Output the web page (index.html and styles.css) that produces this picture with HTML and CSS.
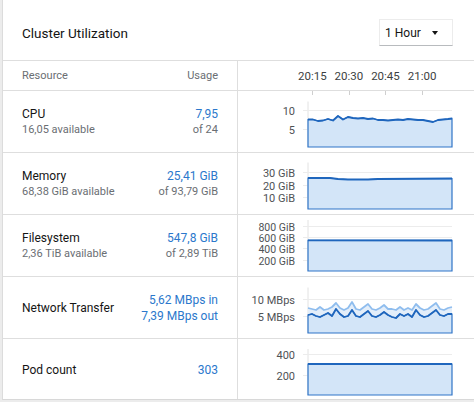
FILE: index.html
```html
<!DOCTYPE html>
<html lang="en">
<head>
<meta charset="utf-8">
<title>Cluster Utilization</title>
<link rel="stylesheet" href="styles.css">
</head>
<body>
<div class="card">
  <div class="card-head">
    <h2 class="title">Cluster Utilization</h2>
    <div class="select"><span>1 Hour</span><span class="caret"></span></div>
  </div>

  <div class="row colhead">
    <div class="left"><span>Resource</span><span>Usage</span></div>
    <div class="right times"><span>20:15</span><span>20:30</span><span>20:45</span><span>21:00</span></div>
  </div>

  <div class="row">
    <div class="left">
      <div class="res"><div class="name">CPU</div><div class="sub">16,05 available</div></div>
      <div class="use"><div class="val">7,95</div><div class="sub">of 24</div></div>
    </div>
    <div class="right">
      <svg class="chart" width="236" height="61" viewBox="0 0 236 61">
        <g class="ticks"><line x1="74.5" y1="-1" x2="74.5" y2="4"/><line x1="111.5" y1="-1" x2="111.5" y2="4"/><line x1="147.5" y1="-1" x2="147.5" y2="4"/><line x1="184.5" y1="-1" x2="184.5" y2="4"/></g>
        <line class="axis" x1="70" y1="10.5" x2="70" y2="56"/>
        <line class="grid" x1="65" y1="19.5" x2="214" y2="19.5"/>
        <line class="grid" x1="65" y1="38.5" x2="214" y2="38.5"/>
        <text class="lbl" x="57" y="23.5">10</text>
        <text class="lbl" x="57" y="42.5">5</text>
        <polygon class="area" points="70,28.5 75,28.5 80,30 85,29.5 90,28 95,29.5 100,25 105,28.5 110,26 115,27 120,27.5 125,27 130,28 135,27.5 140,29 145,29 150,29.5 155,29 160,28.5 165,29 170,28 175,28.5 180,29 185,29 190,30 195,31 200,29 205,28.5 210,28 214,27.5 214,56 70,56"/>
        <polyline class="line" points="70,28.5 75,28.5 80,30 85,29.5 90,28 95,29.5 100,25 105,28.5 110,26 115,27 120,27.5 125,27 130,28 135,27.5 140,29 145,29 150,29.5 155,29 160,28.5 165,29 170,28 175,28.5 180,29 185,29 190,30 195,31 200,29 205,28.5 210,28 214,27.5"/>
      </svg>
    </div>
  </div>

  <div class="row">
    <div class="left">
      <div class="res"><div class="name">Memory</div><div class="sub">68,38 GiB available</div></div>
      <div class="use"><div class="val">25,41 GiB</div><div class="sub">of 93,79 GiB</div></div>
    </div>
    <div class="right">
      <svg class="chart" width="236" height="61" viewBox="0 0 236 61">
        <line class="axis" x1="70" y1="9.5" x2="70" y2="56"/>
        <line class="grid" x1="65" y1="19.5" x2="214" y2="19.5"/>
        <line class="grid" x1="65" y1="32.5" x2="214" y2="32.5"/>
        <line class="grid" x1="65" y1="44.5" x2="214" y2="44.5"/>
        <text class="lbl" x="57" y="23.5">30 GiB</text>
        <text class="lbl" x="57" y="36.5">20 GiB</text>
        <text class="lbl" x="57" y="48.5">10 GiB</text>
        <polygon class="area" points="70,25 92,25 100,26 110,26.5 130,26.5 140,26 214,25.5 214,56 70,56"/>
        <polyline class="line" points="70,25 92,25 100,26 110,26.5 130,26.5 140,26 214,25.5"/>
      </svg>
    </div>
  </div>

  <div class="row">
    <div class="left">
      <div class="res"><div class="name">Filesystem</div><div class="sub">2,36 TiB available</div></div>
      <div class="use"><div class="val">547,8 GiB</div><div class="sub">of 2,89 TiB</div></div>
    </div>
    <div class="right">
      <svg class="chart" width="236" height="61" viewBox="0 0 236 61">
        <line class="axis" x1="70" y1="5" x2="70" y2="56"/>
        <line class="grid" x1="65" y1="11.5" x2="214" y2="11.5"/>
        <line class="grid" x1="65" y1="22.5" x2="214" y2="22.5"/>
        <line class="grid" x1="65" y1="33.5" x2="214" y2="33.5"/>
        <line class="grid" x1="65" y1="45.5" x2="214" y2="45.5"/>
        <text class="lbl dense" x="57" y="15.5">800 GiB</text>
        <text class="lbl dense" x="57" y="26.5">600 GiB</text>
        <text class="lbl dense" x="57" y="37.5">400 GiB</text>
        <text class="lbl dense" x="57" y="49.5">200 GiB</text>
        <polygon class="area" points="70,25.3 214,25.3 214,56 70,56"/>
        <polyline class="line" points="70,25.3 214,25.5"/>
      </svg>
    </div>
  </div>

  <div class="row">
    <div class="left">
      <div class="res"><div class="name">Network Transfer</div></div>
      <div class="use"><div class="val">5,62 MBps in</div><div class="val">7,39 MBps out</div></div>
    </div>
    <div class="right">
      <svg class="chart" width="236" height="61" viewBox="0 0 236 61">
        <line class="axis" x1="70" y1="10.5" x2="70" y2="56"/>
        <line class="grid" x1="65" y1="22.5" x2="214" y2="22.5"/>
        <line class="grid" x1="65" y1="39.5" x2="214" y2="39.5"/>
        <text class="lbl" x="57" y="26.5">10 MBps</text>
        <text class="lbl" x="57" y="43.5">5 MBps</text>
        <polygon class="area2" points="70,31 74,32 78,33 82,30 86,33 90,32 94,30 98,26 102,31 106,33 110,31 114,25 118,32 122,33 126,30 130,27 134,32 138,33 142,31 146,28 150,32 154,32 158,33 162,30 166,33 170,31 174,33 178,27 182,31 186,33 190,32 194,29 198,26 202,32 206,33 210,31 214,30 214,56 70,56"/>
        <polygon class="area" points="70,38 74,37 78,39 82,40 86,38 90,36 94,39 98,32 102,37 106,40 110,39 114,33 118,39 122,40 126,37 130,34 134,39 138,40 142,38 146,35 150,38 154,40 158,41 162,37 166,39 170,37 174,40 178,33 182,38 186,40 190,39 194,36 198,33 202,38 206,39 210,37 214,37 214,56 70,56"/>
        <polyline class="line light" points="70,31 74,32 78,33 82,30 86,33 90,32 94,30 98,26 102,31 106,33 110,31 114,25 118,32 122,33 126,30 130,27 134,32 138,33 142,31 146,28 150,32 154,32 158,33 162,30 166,33 170,31 174,33 178,27 182,31 186,33 190,32 194,29 198,26 202,32 206,33 210,31 214,30"/>
        <polyline class="line" points="70,38 74,37 78,39 82,40 86,38 90,36 94,39 98,32 102,37 106,40 110,39 114,33 118,39 122,40 126,37 130,34 134,39 138,40 142,38 146,35 150,38 154,40 158,41 162,37 166,39 170,37 174,40 178,33 182,38 186,40 190,39 194,36 198,33 202,38 206,39 210,37 214,37"/>
      </svg>
    </div>
  </div>

  <div class="row last">
    <div class="left">
      <div class="res"><div class="name">Pod count</div></div>
      <div class="use"><div class="val">303</div></div>
    </div>
    <div class="right">
      <svg class="chart" width="236" height="61" viewBox="0 0 236 61">
        <line class="axis" x1="70" y1="10" x2="70" y2="56"/>
        <line class="grid" x1="65" y1="15.5" x2="214" y2="15.5"/>
        <line class="grid" x1="65" y1="36.5" x2="214" y2="36.5"/>
        <text class="lbl" x="57" y="19.5">400</text>
        <text class="lbl" x="57" y="40.5">200</text>
        <polygon class="area" points="70,25 214,25 214,56 70,56"/>
        <polyline class="line" points="70,25 214,25"/>
      </svg>
    </div>
  </div>
</div>
</body>
</html>
```

FILE: styles.css
```css
* { box-sizing: border-box; }

html, body {
  margin: 0;
  padding: 0;
}

body {
  background: #ececec;
  font-family: Roboto, "Liberation Sans", sans-serif;
  color: #151515;
  width: 474px;
  height: 402px;
  overflow: hidden;
}

.card {
  margin-left: 2px;
  width: 472px;
  height: 400px;
  background: #fff;
  border-left: 1px solid #dcdcdc;
  border-bottom: 1px solid #d8d8d8;
  overflow: hidden;
}

.card-head {
  height: 61px;
  border-bottom: 1px solid #dedede;
  display: flex;
  align-items: center;
  justify-content: space-between;
  padding: 5px 21px 0 19px;
}

.title {
  margin: 0;
  font-size: 13.5px;
  font-weight: 400;
  color: #151515;
}

.select {
  width: 74px;
  height: 27px;
  border: 1px solid #ececec;
  border-bottom-color: #b8bbbe;
  display: flex;
  align-items: center;
  justify-content: space-between;
  padding: 0 14px 0 5px;
  font-size: 12px;
  color: #151515;
}

.caret {
  width: 0;
  height: 0;
  border-left: 3.5px solid transparent;
  border-right: 3.5px solid transparent;
  border-top: 4px solid #151515;
}

.row {
  display: grid;
  grid-template-columns: 235px 1fr;
  height: 62px;
  border-bottom: 1px solid #dedede;
}

.row.last {
  border-bottom: 0;
}

.row.colhead {
  height: 30px;
}

.left {
  border-right: 1px solid #dedede;
  display: flex;
  align-items: center;
  justify-content: space-between;
  padding: 0 19px;
}

.colhead .left {
  font-size: 11px;
  color: #6a6e73;
}

.times {
  display: grid;
  grid-template-columns: repeat(4, 36.6px);
  align-items: center;
  padding-left: 56px;
  font-size: 11.5px;
  color: #3c3f42;
}

.times span {
  text-align: center;
}

.res, .use {
  display: flex;
  flex-direction: column;
  line-height: 16px;
}

.use {
  align-items: flex-end;
  text-align: right;
}

.name {
  font-size: 12px;
  color: #151515;
}

.sub {
  font-size: 11px;
  color: #6a6e73;
}

.val {
  font-size: 12px;
  color: #2b78cc;
}

.chart {
  display: block;
}

.chart .lbl {
  font-family: Roboto, "Liberation Sans", sans-serif;
  font-size: 11px;
  fill: #4f5255;
  text-anchor: end;
}

.chart .lbl.dense {
  font-size: 10.5px;
}

.chart .grid {
  stroke: #ececec;
  stroke-width: 1;
}

.chart .axis {
  stroke: #e2e2e2;
  stroke-width: 1;
}

.chart .ticks line {
  stroke: #cfcfcf;
  stroke-width: 1;
}

.chart .area {
  fill: #d3e5f8;
  stroke: #2f74c7;
  stroke-width: 1.2;
}

.chart .area2 {
  fill: #e3eefa;
  stroke: none;
}

.chart .line {
  fill: none;
  stroke: #1f66bd;
  stroke-width: 1.8;
  stroke-linejoin: round;
}

.chart .line.light {
  stroke: #8fbdee;
}
```
